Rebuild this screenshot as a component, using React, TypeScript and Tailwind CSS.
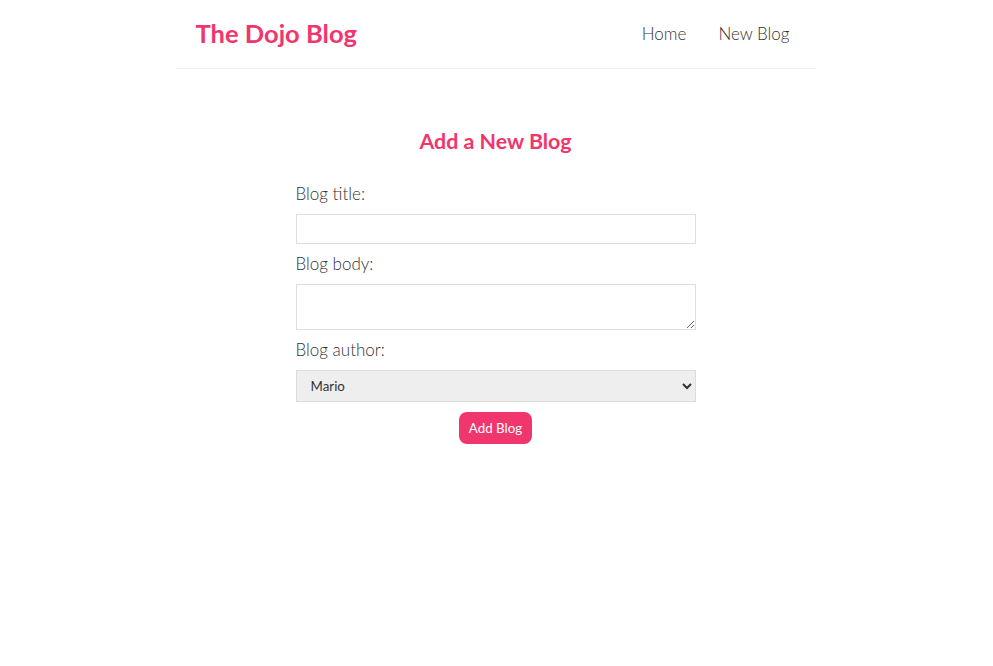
import React, { useState } from "react";

const Navbar = () => (
  <nav className="mx-auto flex max-w-[600px] box-content items-center border-b border-[#f2f2f2] px-5 py-5">
    <h1 className="-mt-px mb-px text-[25.5px] font-bold leading-[28px] text-[#f1356d]">The Dojo Blog</h1>
    <div className="ml-auto flex items-center">
      <a href="#" className="ml-5 px-1.5 text-[17px] font-light leading-[20px] text-[#333]">
        Home
      </a>
      <a href="#" className="ml-5 px-1.5 text-[17px] font-light leading-[20px] text-[#333]">
        New Blog
      </a>
    </div>
  </nav>
);

export default function App() {
  const [title, setTitle] = useState("");
  const [body, setBody] = useState("");
  const [author, setAuthor] = useState("mario");

  return (
    <div
      className="min-h-[666px] w-[991px] bg-white text-[#333]"
      style={{ fontFamily: "Lato, 'Open Sans', sans-serif" }}
    >
      <Navbar />
      <div className="mx-auto my-10 max-w-[600px] box-content p-5">
        {/* Create form */}
        <div className="mx-auto max-w-[400px] text-center">
          <h2 className="mb-[30px] text-[21.4px] font-bold leading-[25px] text-[#f1356d]">Add a New Blog</h2>
          <form onSubmit={(e) => e.preventDefault()} className="flex flex-col">
            <label className="block text-left text-[17px] font-light leading-[20px]">Blog title:</label>
            <input
              type="text"
              value={title}
              onChange={(e) => setTitle(e.target.value)}
              className="my-2.5 block h-[30px] w-full border border-[#ddd] px-2.5 py-1.5"
            />
            <label className="block text-left text-[17px] font-light leading-[20px]">Blog body:</label>
            <textarea
              value={body}
              onChange={(e) => setBody(e.target.value)}
              className="my-2.5 block h-[46px] w-full border border-[#ddd] px-2.5 py-1.5"
            />
            <label className="block text-left text-[17px] font-light leading-[20px]">Blog author:</label>
            <select
              value={author}
              onChange={(e) => setAuthor(e.target.value)}
              className="my-2.5 block h-[32px] w-full border border-[#ddd] bg-[#eee] px-2.5 text-[13.33px] text-[#333]"
            >
              <option value="mario">Mario</option>
              <option value="yoshi">Yoshi</option>
            </select>
            <div>
              <button className="cursor-pointer rounded-lg bg-[#f1356d] px-2.5 py-2 text-[13.33px] leading-[16px] text-white">
                Add Blog
              </button>
            </div>
          </form>
        </div>
      </div>
    </div>
  );
}
